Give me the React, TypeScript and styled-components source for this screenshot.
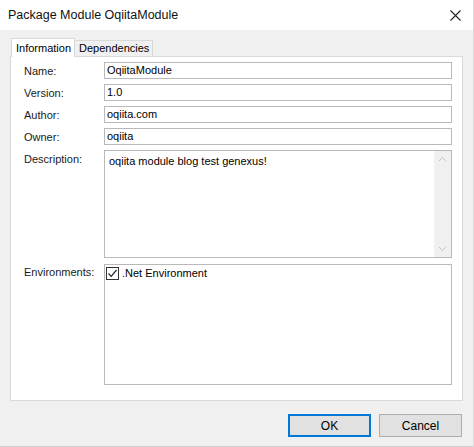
import styled, { createGlobalStyle } from "styled-components";

const Global = createGlobalStyle`
  html, body {
    margin: 0;
    padding: 0;
    background: #f0f0f0;
  }
  * { box-sizing: border-box; }
`;

const Window = styled.div`
  width: 474px;
  height: 447px;
  display: flex;
  flex-direction: column;
  background: #f0f0f0;
  font-family: "Liberation Sans", Arial, sans-serif;
  font-size: 11px;
  color: #000;
  border-right: 1px solid #dcdcdc;
  border-bottom: 1px solid #cfcfcf;
  overflow: hidden;
`;

const TitleBar = styled.div`
  height: 30px;
  background: #fff;
  display: flex;
  align-items: center;
  justify-content: space-between;
  padding: 0 12px 0 8px;
`;

const Title = styled.span`
  font-family: "Liberation Sans", Arial, sans-serif;
  font-size: 12.5px;
  color: #111;
`;

const Body = styled.div`
  flex: 1;
  display: flex;
  flex-direction: column;
  padding: 7px 10px 0 10px;
`;

const TabStrip = styled.div`
  display: flex;
  align-items: flex-end;
  height: 19px;
  padding-left: 1px;
`;

const Tab = styled.div<{ $active?: boolean }>`
  font-size: 11px;
  line-height: 1;
  display: flex;
  align-items: center;
  padding: 0 3px 0 4px;
  height: ${(p) => (p.$active ? "19px" : "16px")};
  background: ${(p) => (p.$active ? "#fff" : "#f0f0f0")};
  border: 1px solid #d9d9d9;
  border-bottom: none;
  margin-bottom: ${(p) => (p.$active ? "-1px" : "0")};
  position: relative;
  z-index: ${(p) => (p.$active ? 1 : 0)};
  ${(p) => (!p.$active ? "border-left: none;" : "")}
`;

const Panel = styled.div`
  width: 453px;
  height: 345px;
  background: #fff;
  border: 1px solid #d9d9d9;
  padding: 5px 10px 0 13px;
`;

const Form = styled.div`
  display: grid;
  grid-template-columns: 80px 1fr;
  row-gap: 5px;
`;

const Label = styled.div<{ $top?: boolean }>`
  font-size: 11px;
  color: #1a1a1a;
  display: flex;
  align-items: ${(p) => (p.$top ? "flex-start" : "center")};
  padding-top: ${(p) => (p.$top ? "3px" : "0")};
`;

const Field = styled.div`
  height: 17px;
  border: 1px solid #b9b9b9;
  padding: 0 2px;
  display: flex;
  align-items: center;
  font-size: 11px;
  line-height: 1;
`;

const TextArea = styled.div`
  height: 108px;
  border: 1px solid #b9b9b9;
  display: flex;
`;

const TextContent = styled.div`
  flex: 1;
  padding: 3px 4px;
  font-size: 11px;
  line-height: 14px;
`;

const ScrollBar = styled.div`
  width: 17px;
  background: #f0f0f0;
  display: flex;
  flex-direction: column;
  justify-content: space-between;
  align-items: center;
  padding: 5px 0;
`;

const ListBox = styled.div`
  height: 121px;
  margin-top: 1px;
  border: 1px solid #b9b9b9;
  padding: 2px 1px;
`;

const CheckRow = styled.label`
  display: flex;
  align-items: center;
  gap: 3px;
  font-size: 11px;
  line-height: 1;
`;

const CheckBox = styled.span`
  width: 13px;
  height: 13px;
  border: 1px solid #333;
  display: inline-flex;
  align-items: center;
  justify-content: center;
  background: #fff;
`;

const ButtonRow = styled.div`
  display: flex;
  justify-content: flex-end;
  gap: 8px;
  padding: 13px 1px 0 0;
`;

const Button = styled.button<{ $default?: boolean }>`
  width: 83px;
  height: 23px;
  background: #e1e1e1;
  border: 1px solid ${(p) => (p.$default ? "#0078d7" : "#adadad")};
  box-shadow: ${(p) => (p.$default ? "inset 0 0 0 1px #0078d7" : "none")};
  font-family: "Liberation Sans", Arial, sans-serif;
  font-size: 12px;
  color: #000;
  padding: 0;
`;

function Chevron({ up }: { up?: boolean }) {
  return (
    <svg width="9" height="6" viewBox="0 0 9 6">
      <path
        d={up ? "M1 5 L4.5 1.5 L8 5" : "M1 1 L4.5 4.5 L8 1"}
        stroke="#c2c2c2"
        strokeWidth="1"
        fill="none"
      />
    </svg>
  );
}

export default function App() {
  return (
    <>
      <Global />
      <Window>
        <TitleBar>
          <Title>Package Module OqiitaModule</Title>
          <svg width="11" height="11" viewBox="0 0 11 11">
            <path d="M0.5 0.5 L10.5 10.5 M10.5 0.5 L0.5 10.5" stroke="#222" strokeWidth="1.1" />
          </svg>
        </TitleBar>
        <Body>
          <TabStrip>
            <Tab $active>Information</Tab>
            <Tab>Dependencies</Tab>
          </TabStrip>
          <Panel>
            <Form>
              <Label>Name:</Label>
              <Field>OqiitaModule</Field>
              <Label>Version:</Label>
              <Field>1.0</Field>
              <Label>Author:</Label>
              <Field>oqiita.com</Field>
              <Label>Owner:</Label>
              <Field>oqiita</Field>
              <Label $top>Description:</Label>
              <TextArea>
                <TextContent>oqiita module blog test genexus!</TextContent>
                <ScrollBar>
                  <Chevron up />
                  <Chevron />
                </ScrollBar>
              </TextArea>
              <Label $top>Environments:</Label>
              <ListBox>
                <CheckRow>
                  <CheckBox>
                    <svg width="11" height="11" viewBox="0 0 11 11">
                      <path d="M1.5 5.5 L4.2 8.3 L9.5 2" stroke="#222" strokeWidth="1.2" fill="none" />
                    </svg>
                  </CheckBox>
                  .Net Environment
                </CheckRow>
              </ListBox>
            </Form>
          </Panel>
          <ButtonRow>
            <Button $default>OK</Button>
            <Button>Cancel</Button>
          </ButtonRow>
        </Body>
      </Window>
    </>
  );
}
